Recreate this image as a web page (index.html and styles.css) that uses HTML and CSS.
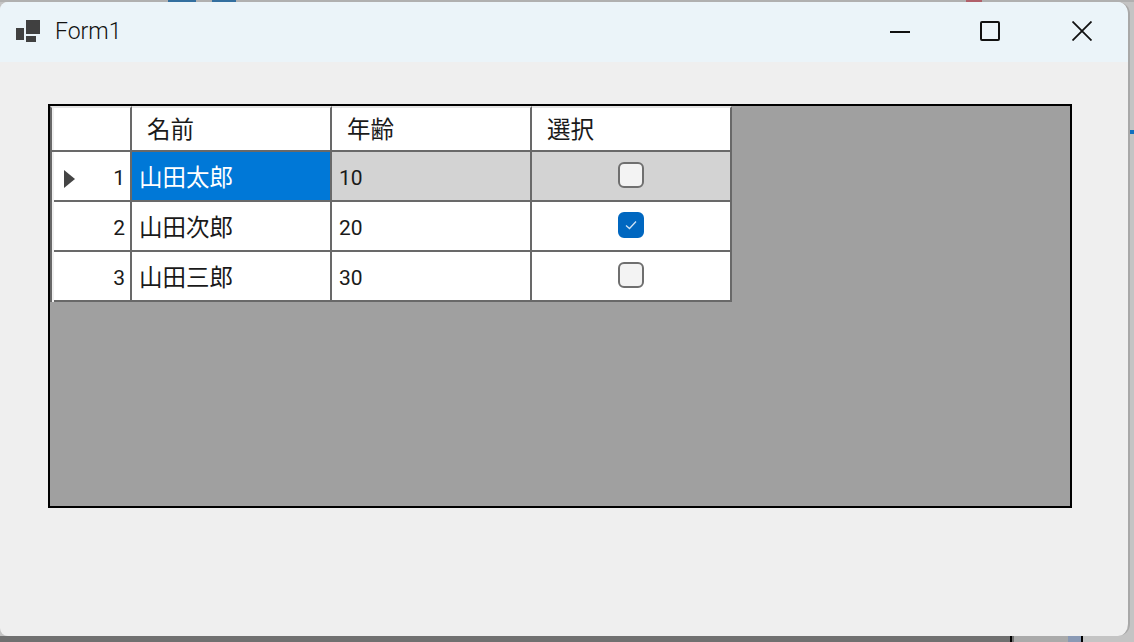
FILE: index.html
```html
<!DOCTYPE html>
<html lang="ja">
<head>
    <meta charset="UTF-8">
    <title>Form1</title>
    <link rel="stylesheet" href="styles.css">
</head>
<body>

<div class="window">
    <div class="titlebar">
        <svg class="app-icon" width="24" height="22" viewBox="0 0 24 22">
            <rect x="0" y="8" width="8" height="12" fill="#404040"/>
            <rect x="10" y="0" width="14" height="14" fill="#404040"/>
            <rect x="10" y="16" width="10" height="6" fill="#404040"/>
        </svg>
        <span class="title">Form1</span>
        <div class="caption-btn">
            <svg width="20" height="20" viewBox="0 0 20 20"><path d="M0 11H20" stroke="#111" stroke-width="2"/></svg>
        </div>
        <div class="caption-btn">
            <svg width="20" height="20" viewBox="0 0 20 20"><rect x="1" y="1" width="18" height="18" rx="1" fill="none" stroke="#111" stroke-width="2"/></svg>
        </div>
        <div class="caption-btn close">
            <svg width="20" height="20" viewBox="0 0 20 20"><path d="M0.5 0.5L19.5 19.5M19.5 0.5L0.5 19.5" stroke="#111" stroke-width="1.8"/></svg>
        </div>
    </div>

    <div class="grid-view">
        <table class="grid">
            <thead>
                <tr>
                    <th class="row-head"></th>
                    <th>名前</th>
                    <th>年齢</th>
                    <th>選択</th>
                </tr>
            </thead>
            <tbody>
                <tr class="current">
                    <td class="row-head"><span class="arrow"></span>1</td>
                    <td class="selected">山田太郎</td>
                    <td class="num">10</td>
                    <td class="check"><span class="checkbox"></span></td>
                </tr>
                <tr>
                    <td class="row-head">2</td>
                    <td>山田次郎</td>
                    <td class="num">20</td>
                    <td class="check">
                        <span class="checkbox checked">
                            <svg width="14" height="12" viewBox="0 0 14 12"><path d="M2 6.5L5.5 9.5L12 2.5" fill="none" stroke="#cfe3f5" stroke-width="1.3"/></svg>
                        </span>
                    </td>
                </tr>
                <tr>
                    <td class="row-head">3</td>
                    <td>山田三郎</td>
                    <td class="num">30</td>
                    <td class="check"><span class="checkbox"></span></td>
                </tr>
            </tbody>
        </table>
    </div>
</div>

</body>
</html>
```

FILE: styles.css
```css
html, body {
    margin: 0;
    height: 100%;
}
body {
    width: 1134px;
    height: 642px;
    overflow: hidden;
    font-family: "Noto Sans CJK JP", "Noto Sans", sans-serif;
    color: #1a1a1a;
    background-color: #c4c4c4;
    background-image:
        linear-gradient(to right, #b0b0b0 168px, #336f9f 168px, #336f9f 196px, #b0b0b0 196px, #b0b0b0 212px, #336f9f 212px, #336f9f 236px, #b0b0b0 236px, #b0b0b0 966px, #b0606a 966px, #b0606a 982px, #b0b0b0 982px),
        linear-gradient(to right, #707070 1010px, #000 1010px, #000 1012px, #707070 1012px, #707070 1014px, #aaaaaa 1014px, #aaaaaa 1068px, #8a9ab5 1068px, #8a9ab5 1081px, #000 1081px, #000 1083px, #c4c4c4 1083px),
        linear-gradient(#1070c0, #1070c0);
    background-repeat: no-repeat;
    background-size: 100% 2px, 100% 6px, 6px 4px;
    background-position: 0 0, 0 636px, 1128px 130px;
}
.window {
    box-sizing: content-box;
    width: 1128px;
    height: 634px;
    margin-top: 2px;
    background-color: #efefef;
    border-right: 2px solid #a8a8a8;
    border-radius: 8px 12px 12px 8px;
    overflow: hidden;
}
.titlebar {
    display: flex;
    align-items: center;
    height: 60px;
    background-color: #ebf4f9;
}
.app-icon {
    margin: -2px 0 0 16px;
}
.title {
    flex: 1;
    margin: -2px 0 0 15px;
    font-family: Roboto, "Noto Sans", sans-serif;
    font-size: 23px;
    font-weight: 300;
    color: #111;
}
.caption-btn {
    display: flex;
    align-items: center;
    justify-content: center;
    width: 90px;
    height: 60px;
}
.caption-btn svg {
    margin-top: -2px;
}
.close {
    width: 92px;
    margin-left: 1px;
}
.grid-view {
    box-sizing: border-box;
    width: 1024px;
    height: 404px;
    margin: 42px 0 0 48px;
    background-color: #a0a0a0;
    border: 2px solid #000;
}
.grid {
    table-layout: fixed;
    width: 682px;
    border-collapse: separate;
    border-spacing: 0;
    background-color: #fff;
}
.grid th, .grid td {
    box-sizing: border-box;
    width: 200px;
    padding: 0 0 0 7px;
    border-right: 2px solid #696969;
    border-bottom: 2px solid #696969;
    font-size: 23.5px;
    font-weight: 400;
    text-align: left;
    white-space: nowrap;
}
.grid th {
    height: 46px;
    padding-left: 15px;
    padding-bottom: 3px;
    border-top: 2px solid #e4e4e4;
}
.grid td {
    height: 50px;
    padding-bottom: 1px;
}
.grid .row-head {
    position: relative;
    width: 82px;
    padding: 3px 5px 0 0;
    border-left: 2px solid #696969;
    box-shadow: inset 2px 0 0 #f0f0f0;
    font-family: Roboto, "Noto Sans", sans-serif;
    font-size: 21px;
    text-align: right;
}
.grid td.row-head::after {
    content: "";
    position: absolute;
    left: 0;
    bottom: -2px;
    width: 2px;
    height: 2px;
    background-color: #f0f0f0;
}
.arrow {
    position: absolute;
    left: 12px;
    top: 18px;
    border-left: 11px solid #444;
    border-top: 9px solid transparent;
    border-bottom: 9px solid transparent;
}
.grid .num {
    padding: 3px 0 0 7px;
    font-family: Roboto, "Noto Sans", sans-serif;
    font-size: 21px;
}
.grid .check {
    padding: 0 0 9px;
    text-align: center;
}
.current td {
    background-color: #d3d3d3;
}
.current .row-head {
    background-color: #fff;
}
.current .selected {
    background-color: #0078d7;
    color: #fff;
}
.checkbox {
    box-sizing: border-box;
    display: inline-flex;
    align-items: center;
    justify-content: center;
    width: 26px;
    height: 26px;
    vertical-align: middle;
    background-color: #f3f3f3;
    border: 2px solid #6f6f6f;
    border-radius: 6px;
}
.checked {
    background-color: #0067c0;
    border-color: #0067c0;
}
```
